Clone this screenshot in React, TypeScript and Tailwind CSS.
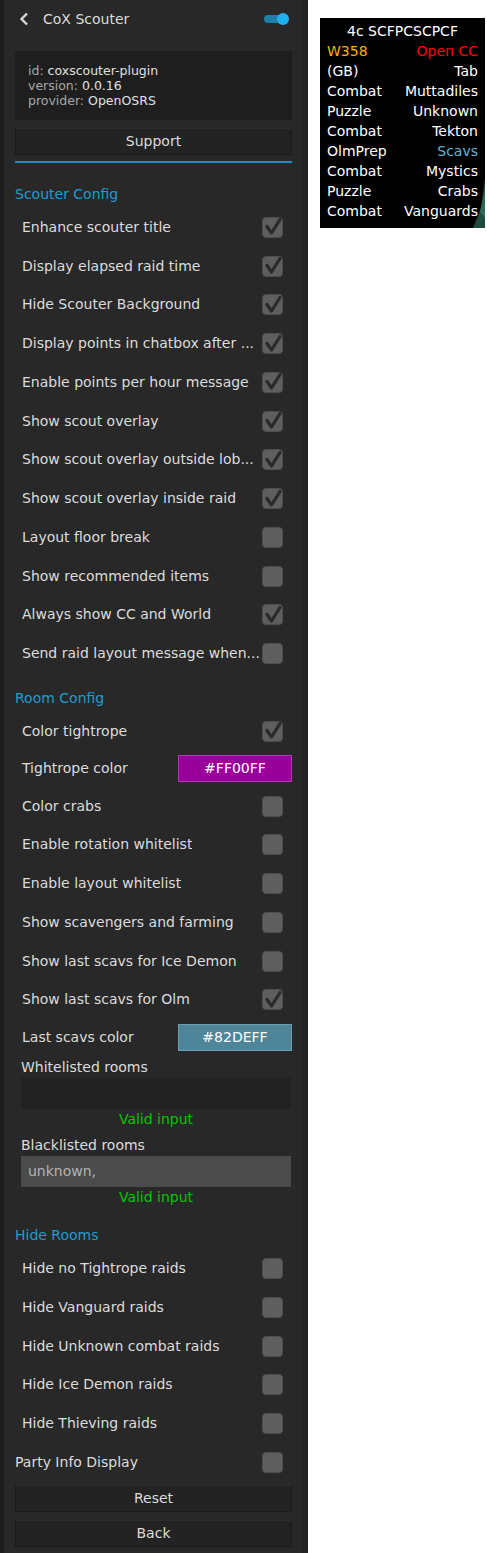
import React from 'react'

const FONT = { fontFamily: '"DejaVu Sans", "Noto Sans", sans-serif' }

type Row =
  | { kind: 'check'; label: string; checked: boolean }
  | { kind: 'color'; label: string; value: string; bg: string; border: string }

const SCOUTER: Row[] = [
  { kind: 'check', label: 'Enhance scouter title', checked: true },
  { kind: 'check', label: 'Display elapsed raid time', checked: true },
  { kind: 'check', label: 'Hide Scouter Background', checked: true },
  { kind: 'check', label: 'Display points in chatbox after ...', checked: true },
  { kind: 'check', label: 'Enable points per hour message', checked: true },
  { kind: 'check', label: 'Show scout overlay', checked: true },
  { kind: 'check', label: 'Show scout overlay outside lob...', checked: true },
  { kind: 'check', label: 'Show scout overlay inside raid', checked: true },
  { kind: 'check', label: 'Layout floor break', checked: false },
  { kind: 'check', label: 'Show recommended items', checked: false },
  { kind: 'check', label: 'Always show CC and World', checked: true },
  { kind: 'check', label: 'Send raid layout message when...', checked: false },
]

const ROOM: Row[] = [
  { kind: 'check', label: 'Color tightrope', checked: true },
  { kind: 'color', label: 'Tightrope color', value: '#FF00FF', bg: 'bg-[#990099]', border: 'border-[#b733b7]' },
  { kind: 'check', label: 'Color crabs', checked: false },
  { kind: 'check', label: 'Enable rotation whitelist', checked: false },
  { kind: 'check', label: 'Enable layout whitelist', checked: false },
  { kind: 'check', label: 'Show scavengers and farming', checked: false },
  { kind: 'check', label: 'Show last scavs for Ice Demon', checked: false },
  { kind: 'check', label: 'Show last scavs for Olm', checked: true },
  { kind: 'color', label: 'Last scavs color', value: '#82DEFF', bg: 'bg-[#4e8599]', border: 'border-[#6a9db0]' },
]

const HIDE = [
  'Hide no Tightrope raids',
  'Hide Vanguard raids',
  'Hide Unknown combat raids',
  'Hide Ice Demon raids',
  'Hide Thieving raids',
]

const OVERLAY: [string, string, string, string][] = [
  ['W358', 'text-[#ffb000]', 'Open CC', 'text-[#ff0000]'],
  ['(GB)', 'text-white', 'Tab', 'text-white'],
  ['Combat', 'text-white', 'Muttadiles', 'text-white'],
  ['Puzzle', 'text-white', 'Unknown', 'text-white'],
  ['Combat', 'text-white', 'Tekton', 'text-white'],
  ['OlmPrep', 'text-white', 'Scavs', 'text-[#5fb6dc]'],
  ['Combat', 'text-white', 'Mystics', 'text-white'],
  ['Puzzle', 'text-white', 'Crabs', 'text-white'],
  ['Combat', 'text-white', 'Vanguards', 'text-white'],
]

function Checkbox({ checked }: { checked: boolean }) {
  return (
    <div className="w-[21px] h-[21px] rounded-[4px] bg-[#5e5e5e] border border-[#4e4e4e] flex items-center justify-center shrink-0">
      {checked && (
        <svg width="18" height="18" viewBox="0 0 18 18">
          <polyline points="3,8.5 7.5,15 16,1.5" fill="none" stroke="#2a2a2a" strokeWidth="3.2" strokeLinejoin="round" strokeLinecap="round" />
        </svg>
      )}
    </div>
  )
}

function SectionHeader({ title, className = '' }: { title: string; className?: string }) {
  return (
    <div className={`h-[28px] flex items-center text-[14px] text-[#1c9dcf] ${className}`}>{title}</div>
  )
}

function ConfigRow({ row }: { row: Row }) {
  if (row.kind === 'color') {
    return (
      <div className="h-[36px] flex items-center justify-between pl-[7px]">
        <span className="text-[14px] text-[#dcdcdc] whitespace-nowrap">{row.label}</span>
        <div className={`w-[114px] h-[27px] border ${row.bg} ${row.border} flex items-center justify-center text-[14px] text-white`}>
          {row.value}
        </div>
      </div>
    )
  }
  return (
    <div className="h-[38.75px] flex items-center justify-between pl-[7px] pr-[9px]">
      <span className="text-[14px] text-[#dcdcdc] whitespace-nowrap overflow-hidden">{row.label}</span>
      <Checkbox checked={row.checked} />
    </div>
  )
}

function PanelButton({ label, className = '' }: { label: string; className?: string }) {
  return (
    <div className={`h-[27px] bg-[#232323] border border-[#1a1a1a] border-t-[#2e2e2e] flex items-center justify-center text-[14px] text-[#dcdcdc] ${className}`}>
      {label}
    </div>
  )
}

export default function App() {
  return (
    <div className="min-h-[1553px] w-[487px] bg-white flex items-start" style={FONT}>
      {/* PANEL DE CONFIGURACIÓN */}
      <div className="w-[308px] min-h-[1553px] bg-[#282828] border-l-4 border-l-[#1d1d1d] border-r-[6px] border-r-[#232323] pl-[11px] pr-[10px] flex flex-col">
        <div className="h-[37px] flex items-center justify-between pt-[1px]">
          <div className="flex items-center">
            <svg width="10" height="14" viewBox="0 0 10 14" className="ml-[4px]">
              <polyline points="8,1.5 2.5,7 8,12.5" fill="none" stroke="#d8d8d8" strokeWidth="2.4" />
            </svg>
            <span className="ml-[14px] text-[14px] text-[#dcdcdc]">CoX Scouter</span>
          </div>
          <div className="relative w-[25px] h-[12px] mr-[3px]">
            <div className="absolute left-0 top-[2px] w-[20px] h-[8px] rounded-full bg-[#1e7fa8]" />
            <div className="absolute right-0 top-0 w-[12px] h-[12px] rounded-full bg-[#1db2ee]" />
          </div>
        </div>

        <div className="mt-[14px] h-[69px] bg-[#1e1e1e] pl-[13px] flex flex-col justify-center text-[12.5px] leading-[15px]">
          <div><span className="text-[#a8a8a8]">id: </span><span className="text-[#e0e0e0]">coxscouter-plugin</span></div>
          <div><span className="text-[#a8a8a8]">version: </span><span className="text-[#e0e0e0]">0.0.16</span></div>
          <div><span className="text-[#a8a8a8]">provider: </span><span className="text-[#e0e0e0]">OpenOSRS</span></div>
        </div>

        <PanelButton label="Support" className="mt-[8px]" />
        <div className="mt-[6px] h-[2px] bg-[#1e8db8]" />

        <SectionHeader title="Scouter Config" className="mt-[17px]" />
        {SCOUTER.map((r) => <ConfigRow key={r.label} row={r} />)}

        <SectionHeader title="Room Config" className="mt-[11px]" />
        {ROOM.map((r) => <ConfigRow key={r.label} row={r} />)}

        <div className="pl-[6px] pr-[1px] text-[14px]">
          <div className="mt-[2px] h-[21px] flex items-center text-[#dcdcdc]">Whitelisted rooms</div>
          <div className="h-[31px] bg-[#222222]" />
          <div className="h-[20px] flex items-center justify-center text-[#00c400]">Valid input</div>
          <div className="mt-[6px] h-[20px] flex items-center text-[#dcdcdc]">Blacklisted rooms</div>
          <div className="mt-[1px] h-[31px] bg-[#4b4b4b] flex items-center pl-[7px] text-[#b4b4b4]">unknown,</div>
          <div className="h-[20px] flex items-center justify-center text-[#00c400]">Valid input</div>
        </div>

        <SectionHeader title="Hide Rooms" className="mt-[14px]" />
        {HIDE.map((l) => <ConfigRow key={l} row={{ kind: 'check', label: l, checked: false }} />)}
        <div className="h-[38.75px] flex items-center justify-between pr-[9px]">
          <span className="text-[14px] text-[#dcdcdc]">Party Info Display</span>
          <Checkbox checked={false} />
        </div>

        <PanelButton label="Reset" className="mt-[3px] h-[26px]" />
        <PanelButton label="Back" className="mt-[8px]" />
      </div>

      {/* OVERLAY DEL SCOUT */}
      <div className="ml-[12px] mt-[18px] w-[165px] h-[210px] bg-black relative overflow-hidden px-[7px] pt-[3px] text-[14px]">
        <svg className="absolute right-0 bottom-0" width="14" height="50" viewBox="0 0 14 50">
          <polygon points="14,0 14,50 2,50 10,30" fill="#1f4a3e" />
          <polygon points="14,12 14,40 9,34" fill="#2d6b58" />
        </svg>
        <div className="h-[20px] flex items-center justify-center text-white relative">4c SCFPCSCPCF</div>
        {OVERLAY.map(([l, lc, r, rc], i) => (
          <div key={i} className="h-[20px] flex items-center justify-between relative">
            <span className={lc}>{l}</span>
            <span className={rc}>{r}</span>
          </div>
        ))}
      </div>
    </div>
  )
}
